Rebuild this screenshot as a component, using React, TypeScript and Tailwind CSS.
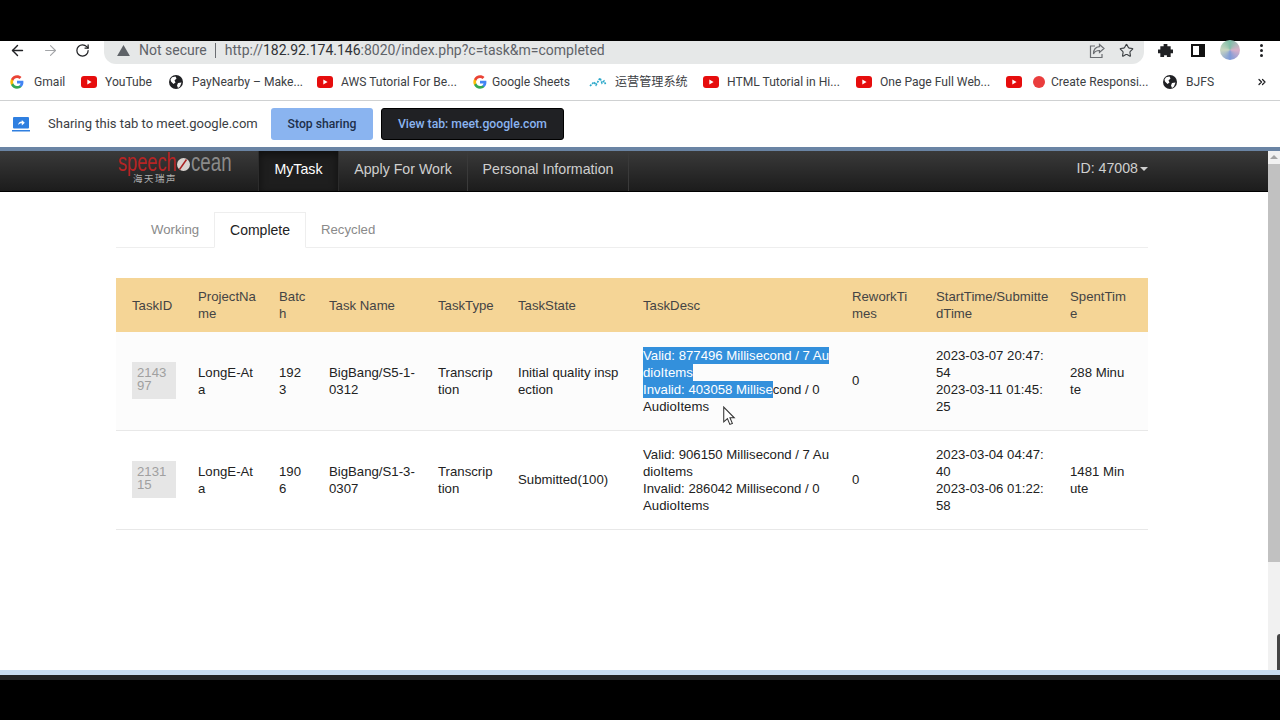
import { ArrowLeft, ArrowRight, RotateCw, Star, ChevronsRight } from "lucide-react";
import type { ReactNode } from "react";

const chromeFont = "font-['Roboto','Noto_Sans',sans-serif]";

function GoogleG() {
    return (
        <svg viewBox="0 0 24 24" className="w-[14px] h-[14px] shrink-0">
            <path fill="#4285F4" d="M23 12.3c0-.8-.1-1.600-.2-2.300H12v4.400h6.200c-.3 1.400-1.100 2.600-2.300 3.400v2.800h3.700c2.100-2 3.400-4.900 3.400-8.300z" />
            <path fill="#34A853" d="M12 23.500c3.100 0 5.700-1 7.600-2.800l-3.700-2.900c-1 .7-2.300 1.100-3.900 1.100-3 0-5.500-2-6.400-4.700H1.800v2.900c1.900 3.800 5.800 6.400 10.200 6.400z" />
            <path fill="#FBBC05" d="M5.600 14.200c-.5-1.400-.5-3 0-4.400V6.900H1.800c-1.600 3.200-1.600 7 0 10.200l3.800-2.900z" />
            <path fill="#EA4335" d="M12 5.100c1.700 0 3.200.6 4.400 1.700l3.300-3.300C17.700 1.600 15.100.5 12 .5 7.600.5 3.700 3.100 1.800 6.900l3.800 2.900C6.500 7.100 9 5.100 12 5.100z" />
        </svg>
    );
}

function YouTube() {
    return (
        <svg viewBox="0 0 16 12" className="w-4 h-3 shrink-0">
            <rect width="16" height="12" rx="3" fill="#e60d0d" />
            <path d="M6.300 3.500 10.600 6l-4.300 2.500z" fill="#fff" />
        </svg>
    );
}

function Globe() {
    return (
        <svg viewBox="0 0 14 14" className="w-[14px] h-[14px] shrink-0">
            <circle cx="7" cy="7" r="7" fill="#202124" />
            <path d="M3 2.200 6.500 1.500 7.500 3.500 5.500 5.500 6.500 7.500 4.500 9 2 6.500 1.500 4.500zM9 8l3.500-.5L11 11.500 9 13 8 10.500z" fill="#fff" />
        </svg>
    );
}

function ChartMark() {
    return (
        <svg viewBox="0 0 18 12" className="w-[18px] h-3 shrink-0">
            <path d="M1 10 5 6l2 3 4-7 2 5 2-2 2 4" fill="none" stroke="#2aa7c9" strokeWidth="1.600" strokeDasharray="2 1" />
        </svg>
    );
}

const bookmarks: { w: string; gap: string; icon: ReactNode; label: string }[] = [
    { w: "w-[71px]", gap: "gap-[10px]", icon: <GoogleG />, label: "Gmail" },
    { w: "w-[88px]", gap: "gap-2", icon: <YouTube />, label: "YouTube" },
    { w: "w-[148px]", gap: "gap-[9px]", icon: <Globe />, label: "PayNearby – Make..." },
    { w: "w-[156px]", gap: "gap-2", icon: <YouTube />, label: "AWS Tutorial For Be..." },
    { w: "w-[116px]", gap: "gap-[5px]", icon: <GoogleG />, label: "Google Sheets" },
    { w: "w-[114px]", gap: "gap-2", icon: <ChartMark />, label: "运营管理系统" },
    { w: "w-[153px]", gap: "gap-2", icon: <YouTube />, label: "HTML Tutorial in Hi..." },
    { w: "w-[150px]", gap: "gap-2", icon: <YouTube />, label: "One Page Full Web..." },
];

const rows = [
    {
        id: "214397",
        project: "LongE-Ata",
        batch: "1923",
        name: "BigBang/S5-1-0312",
        state: "Initial quality inspection",
        rework: "0",
        start: "2023-03-07 20:47:54",
        submit: "2023-03-11 01:45:25",
        spent: "288 Minute",
        h: "h-[98px]",
        desc: (
            <>
                <span className="bg-[#3390dc] text-white py-px">Valid: 877496 Millisecond / 7 AudioItems </span>
                <br />
                <span className="bg-[#3390dc] text-white py-px">Invalid: 403058 Millise</span>cond / 0 <span className="inline-block">AudioItems</span>
            </>
        ),
    },
    {
        id: "213115",
        project: "LongE-Ata",
        batch: "1906",
        name: "BigBang/S1-3-0307",
        state: "Submitted(100)",
        rework: "0",
        start: "2023-03-04 04:47:40",
        submit: "2023-03-06 01:22:58",
        spent: "1481 Minute",
        h: "h-[99px]",
        desc: (
            <>
                Valid: 906150 Millisecond / 7 AudioItems
                <br />
                Invalid: 286042 Millisecond / 0 <span className="inline-block">AudioItems</span>
            </>
        ),
    },
];

const heads = ["TaskID", "ProjectName", "Batch", "Task Name", "TaskType", "TaskState", "TaskDesc", "ReworkTimes", "StartTime/SubmittedTime", "SpentTime"];
const colWidths = ["w-[66px]", "w-[81px]", "w-[50px]", "w-[109px]", "w-[80px]", "w-[125px]", "w-[209px]", "w-[84px]", "w-[134px] !pr-[2px]", "w-[94px] !pr-[21px]"];

export default function App() {
    return (
        <div className="w-[1280px] h-[720px] bg-black flex flex-col overflow-hidden relative">
            <div className="h-[41px] shrink-0" />

            {/* Browser toolbar */}
            <div className={`h-[23px] shrink-0 bg-white flex items-start ${chromeFont}`}>
                <div className="w-[104px] shrink-0 flex items-center h-[18px] text-[#202124]">
                    <ArrowLeft className="w-[17px] h-[17px] ml-[9px]" strokeWidth={2} />
                    <ArrowRight className="w-[17px] h-[17px] ml-[16px] text-[#a3a5a8]" strokeWidth={1.500} />
                    <RotateCw className="w-[15px] h-[15px] ml-[16px]" strokeWidth={2} />
                </div>
                <div className="w-[1040px] h-[23px] pb-1 bg-[#e6e8e8] rounded-b-[12px] flex items-center text-[14px] text-[#5f6368]">
                    <svg viewBox="0 0 14 12" className="w-[13px] h-[11px] ml-[13px] shrink-0">
                        <path d="M7 0 14 12H0z" fill="#5f6368" />
                    </svg>
                    <span className="ml-[9px]">Not secure</span>
                    <span className="w-px h-[15px] bg-[#6b6e72] ml-[8px]" />
                    <span className="ml-[9px]">
                        http://<span className="text-[#303236]">182.92.174.146</span>:8020/index.php?c=task&amp;m=completed
                    </span>
                    <div className="ml-auto flex items-center gap-[14px] pr-[10px]">
                        <svg viewBox="0 0 16 16" className="w-4 h-4" fill="none" stroke="#6a6d71" strokeWidth="1.200">
                            <path d="M6 3H1.500v11.500H13V11" />
                            <path d="M10.500 1.500 15 5.500 10.500 9.500V7.500C7.500 7.500 5.500 8.500 4.500 11 4.500 7 6.500 4 10.500 3.700z" />
                        </svg>
                        <Star className="w-[15px] h-[15px] text-[#3c4043]" strokeWidth={1.800} />
                    </div>
                </div>
                <div className="flex-1 flex items-center h-[18px] relative">
                    <svg viewBox="0 0 16 16" className="w-[15px] h-[15px] ml-[14px]">
                        <path d="M6 1h4v2.500h3.500V7H16v4h-2.500v4H9.500v-2h-3v2H2.500v-4H0V7h2.500V3.500H6z" fill="#202124" />
                    </svg>
                    <div className="w-[14px] h-[13px] border-[2.500px] border-[#111] border-r-[6px] ml-[18px]" />
                    <div className="w-[20px] h-[20px] rounded-full bg-[conic-gradient(#7fbfa8,#d9b0c9,#7d9ad8,#c9d6c0,#7fbfa8)] ml-[15px]" />
                    <div className="flex flex-col gap-[2px] ml-[20px]">
                        <div className="w-[3px] h-[3px] rounded-full bg-[#202124]" />
                        <div className="w-[3px] h-[3px] rounded-full bg-[#202124]" />
                        <div className="w-[3px] h-[3px] rounded-full bg-[#202124]" />
                    </div>
                </div>
            </div>

            {/* Bookmarks */}
            <div className={`h-[37px] shrink-0 bg-white border-b border-[#cfd1d2] flex items-center pl-[10px] text-[12.100px] text-[#3c4043] ${chromeFont}`}>
                {bookmarks.map((b) => (
                    <div key={b.label} className={`${b.w} ${b.gap} shrink-0 flex items-center whitespace-nowrap`}>
                        {b.icon}
                        <span className="font-['Roboto','Noto_Sans_CJK_SC',sans-serif]">{b.label}</span>
                    </div>
                ))}
                <div className="w-[157px] shrink-0 flex items-center whitespace-nowrap">
                    <YouTube />
                    <span className="w-3 h-3 rounded-full bg-[#ea3d3d] ml-[11px] mr-[6px]" />
                    <span>Create Responsi...</span>
                </div>
                <div className="w-[93px] shrink-0 flex items-center gap-[9px]">
                    <Globe />
                    <span>BJFS</span>
                </div>
                <ChevronsRight className="w-[12px] h-[12px] text-[#202124]" strokeWidth={2.500} />
            </div>

            {/* Sharing bar */}
            <div className={`h-[46px] shrink-0 bg-white flex items-center ${chromeFont}`}>
                <svg viewBox="0 0 18 16" className="w-[18px] h-4 ml-[12px] shrink-0">
                    <rect x="1" y="1" width="16" height="11.500" rx="1" fill="#2f7fe0" />
                    <rect y="14" width="18" height="1.500" fill="#2f7fe0" />
                    <path d="M6 9c.3-2 1.500-3.300 3.800-3.500V4l3 2.700-3 2.700V7.200C8.200 7.200 7 7.800 6 9z" fill="#fff" />
                </svg>
                <span className="ml-[18px] w-[210px] whitespace-nowrap text-[#3c4043] text-[13px]">Sharing this tab to meet.google.com</span>
                <button className="ml-[13px] w-[102px] h-[32px] bg-[#8ab4f0] rounded-[3px] text-[#1d2f4a] font-medium text-[12.200px]">Stop sharing</button>
                <button className="ml-[8px] w-[183px] h-[32px] bg-[#202124] border border-black rounded-[3px] text-[#8ab4f0] font-medium text-[12.200px]">View tab: meet.google.com</button>
            </div>

            {/* Page */}
            <div className="h-[523px] shrink-0 flex flex-col bg-white font-['Liberation_Sans',sans-serif] relative">
                <div className="h-1 shrink-0 bg-[#6a84a4]" />
                <div className="flex flex-1 min-h-0">
                    <div className="flex-1 flex flex-col min-w-0">
                        {/* Navbar */}
                        <div className="h-[41px] shrink-0 bg-gradient-to-b from-[#3a3a3a] to-[#1c1c1c] border-b border-black flex items-stretch pl-[118px] pr-[120px] text-[14.200px]">
                            <div className="w-[140px] shrink-0 flex flex-col leading-none pt-[1px]">
                                <div className="text-[26px] font-light leading-[21px] whitespace-nowrap flex items-center">
                                    <span className="w-[59px] inline-block scale-x-[0.7] origin-left text-[#b52424]">speech</span>
                                    <svg viewBox="0 0 13 13" className="w-[13px] h-[13px] shrink-0 mt-[3px]">
                                        <circle cx="6.500" cy="6.500" r="6.500" fill="#d9d4d0" />
                                        <path d="M2.500 11.500 9.500 1.500" stroke="#a92222" strokeWidth="1.500" />
                                    </svg>
                                    <span className="w-[41px] ml-[1px] inline-block scale-x-[0.72] origin-left text-[#8a8a8a]">cean</span>
                                </div>
                                <div className="text-[9.500px] text-[#b0b0b0] ml-[15px] tracking-[1.500px] font-['Noto_Sans_CJK_SC',sans-serif] leading-[11px]">海天瑞声</div>
                            </div>
                            <div className="w-[81px] shrink-0 bg-[#1e1e1e] shadow-[inset_0_3px_8px_rgba(0,0,0,0.5)] border-x border-[#2c2c2c] text-white flex items-center justify-center pb-[3px]">MyTask</div>
                            <div className="w-[129px] shrink-0 border-r border-[#3a3a3a] text-[#cfcfcf] flex items-center justify-center pb-[3px]">Apply For Work</div>
                            <div className="w-[161px] shrink-0 border-r border-[#3a3a3a] text-[#cfcfcf] flex items-center justify-center pb-[3px]">Personal Information</div>
                            <div className="ml-auto text-[#cfcfcf] flex items-center gap-[2px] pb-[5px]">
                                ID: 47008
                                <span className="w-0 h-0 border-x-[4px] border-x-transparent border-t-[4px] border-t-[#cfcfcf]" />
                            </div>
                        </div>

                        <div className="flex-1 pl-[116px] pr-[120px] text-[13.200px] leading-[17px]">
                            {/* Tabs */}
                            <div className="h-[36px] mt-[20px] flex items-end border-b border-[#eeeeee] pl-[19px]">
                                <div className="w-[79px] h-[35px] flex items-center text-[#8a8a8a] pl-[16px]">Working</div>
                                <div className="w-[92px] h-[36px] -mb-px bg-white border border-[#eeeeee] border-b-white flex items-center justify-center text-[#222] text-[14px]">Complete</div>
                                <div className="h-[35px] flex items-center text-[#8a8a8a] pl-[15px]">Recycled</div>
                            </div>

                            {/* Tasks table */}
                            <table className="mt-[30px] w-[1032px] table-fixed border-collapse text-[#222]">
                                <thead>
                                    <tr className="h-[54px] bg-[#f5d596]">
                                        {heads.map((h, i) => (
                                            <th key={h} className={`${colWidths[i]} pl-4 pr-[6px] font-normal text-left text-[#444] break-all align-middle`}>{h}</th>
                                        ))}
                                    </tr>
                                </thead>
                                <tbody>
                                    {rows.map((r, idx) => (
                                        <tr key={r.id} className={`${r.h} border-b border-[#e8e8e8] ${idx === 0 ? "bg-[#fcfcfc]" : "bg-white"}`}>
                                            <td className="pl-4 pr-1 align-middle">
                                                <div className="w-[44px] h-[37px] bg-[#e6e6e6] text-[#a0a0a0] px-[5px] pt-[4px] leading-[13px] break-all">{r.id}</div>
                                            </td>
                                            <td className="pl-4 pr-[6px] break-all">{r.project}</td>
                                            <td className="pl-4 pr-[6px] break-all">{r.batch}</td>
                                            <td className="pl-4 pr-[6px]">{r.name}</td>
                                            <td className="pl-4 pr-[7px] break-all">Transcription</td>
                                            <td className="pl-4 pr-[6px] break-all">{r.state}</td>
                                            <td className="pl-4 pr-1 break-all">{r.desc}</td>
                                            <td className="pl-4 pr-[6px]">{r.rework}</td>
                                            <td className="pl-4 pr-[5px] break-all">
                                                {r.start}
                                                <br />
                                                {r.submit}
                                            </td>
                                            <td className="pl-4 pr-[21px] break-all">{r.spent}</td>
                                        </tr>
                                    ))}
                                </tbody>
                            </table>
                        </div>
                    </div>

                    {/* Scrollbar */}
                    <div className="w-3 shrink-0 bg-[#f1f1f1] flex flex-col items-center">
                        <div className="w-0 h-0 mt-[4px] border-x-[4px] border-x-transparent border-b-[4px] border-b-[#a3a3a3]" />
                        <div className="w-full h-[398px] mt-[5px] bg-[#c1c1c1]" />
                    </div>
                </div>
                <div className="absolute right-0 bottom-0 w-[3px] h-[36px] bg-[#444] rounded-tl-[3px]" />
                {/* Mouse pointer */}
                <svg viewBox="0 0 12 19" className="absolute left-[722px] top-[259px] w-[14px] h-[20px]">
                    <path d="M1 1v14l3.500-3 2.300 5.500 2.400-1-2.300-5.300H11z" fill="#fff" stroke="#333" strokeWidth="1" />
                </svg>
            </div>

            <div className="h-[5px] shrink-0 bg-[#c9dcf0]" />
            <div className="h-[5px] shrink-0 bg-[#222]" />
        </div>
    );
}
